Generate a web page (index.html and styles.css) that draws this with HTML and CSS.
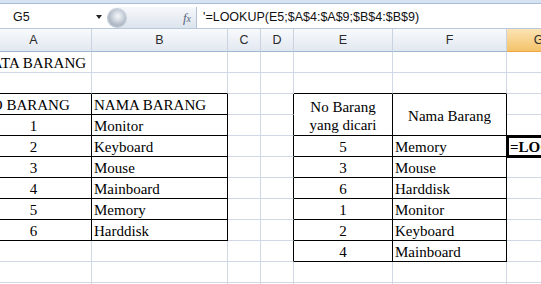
FILE: index.html
```html
<!DOCTYPE html>
<html lang="id">
<head>
    <meta charset="UTF-8">
    <title>LOOKUP - Data Barang</title>
    <link rel="stylesheet" href="styles.css">
</head>
<body>
    <div class="ribbon-edge"></div>

    <div class="formula-bar">
        <div class="name-box">
            <span>G5</span>
            <i class="drop"></i>
        </div>
        <div class="fx-box">
            <span class="grip"></span>
            <span class="fx">f<small>x</small></span>
        </div>
        <div class="formula">'=LOOKUP(E5;$A$4:$A$9;$B$4:$B$9)</div>
    </div>

    <div class="sheet">
        <div class="grid">
            <!-- kolom -->
            <div class="col-head">A</div>
            <div class="col-head">B</div>
            <div class="col-head">C</div>
            <div class="col-head">D</div>
            <div class="col-head">E</div>
            <div class="col-head">F</div>
            <div class="col-head on">G</div>

            <!-- baris 1 -->
            <div class="c ind">DATA BARANG</div>
            <div class="c"></div>
            <div class="c"></div>
            <div class="c"></div>
            <div class="c"></div>
            <div class="c"></div>
            <div class="c"></div>

            <!-- baris 2 -->
            <div class="c above"></div>
            <div class="c above"></div>
            <div class="c"></div>
            <div class="c"></div>
            <div class="c above"></div>
            <div class="c above"></div>
            <div class="c"></div>

            <!-- baris 3 -->
            <div class="c tb ind">NO BARANG</div>
            <div class="c tb">NAMA BARANG</div>
            <div class="c"></div>
            <div class="c before"></div>
            <div class="c tb head2"><span>No Barang<br>yang dicari</span></div>
            <div class="c tb head2"><span>Nama Barang</span></div>
            <div class="c"></div>

            <!-- baris 4 -->
            <div class="c tb mid">1</div>
            <div class="c tb">Monitor</div>
            <div class="c"></div>
            <div class="c before"></div>
            <div class="c"></div>

            <!-- baris 5 -->
            <div class="c tb mid">2</div>
            <div class="c tb">Keyboard</div>
            <div class="c"></div>
            <div class="c before"></div>
            <div class="c tb mid">5</div>
            <div class="c tb">Memory</div>
            <div class="c sel">=LOOKUP(E5;$A$4:$A$9;$B$4:$B$9)</div>

            <!-- baris 6 -->
            <div class="c tb mid">3</div>
            <div class="c tb">Mouse</div>
            <div class="c"></div>
            <div class="c before"></div>
            <div class="c tb mid">3</div>
            <div class="c tb">Mouse</div>
            <div class="c"></div>

            <!-- baris 7 -->
            <div class="c tb mid">4</div>
            <div class="c tb">Mainboard</div>
            <div class="c"></div>
            <div class="c before"></div>
            <div class="c tb mid">6</div>
            <div class="c tb">Harddisk</div>
            <div class="c"></div>

            <!-- baris 8 -->
            <div class="c tb mid">5</div>
            <div class="c tb">Memory</div>
            <div class="c"></div>
            <div class="c before"></div>
            <div class="c tb mid">1</div>
            <div class="c tb">Monitor</div>
            <div class="c"></div>

            <!-- baris 9 -->
            <div class="c tb mid">6</div>
            <div class="c tb">Harddisk</div>
            <div class="c"></div>
            <div class="c before"></div>
            <div class="c tb mid">2</div>
            <div class="c tb">Keyboard</div>
            <div class="c"></div>

            <!-- baris 10 -->
            <div class="c"></div>
            <div class="c"></div>
            <div class="c"></div>
            <div class="c before"></div>
            <div class="c tb mid">4</div>
            <div class="c tb">Mainboard</div>
            <div class="c"></div>

            <!-- baris 11 -->
            <div class="c"></div>
            <div class="c"></div>
            <div class="c"></div>
            <div class="c"></div>
            <div class="c"></div>
            <div class="c"></div>
            <div class="c"></div>

            <!-- baris 12 -->
            <div class="c"></div>
            <div class="c"></div>
            <div class="c"></div>
            <div class="c"></div>
            <div class="c"></div>
            <div class="c"></div>
            <div class="c"></div>
        </div>
    </div>
</body>
</html>
```

FILE: styles.css
```css
body {
    margin: 0;
    background: #fff;
    overflow: hidden;
    font-family: "Liberation Sans", Arial, sans-serif;
}

/* sisa pita di atas */
.ribbon-edge {
    height: 3px;
    background: #d6e3f3;
    border-bottom: 1px solid #a9bdd6;
}

/* formula bar */
.formula-bar {
    display: flex;
    height: 24px;
    border-bottom: 1px solid #b9c9dc;
}

.name-box {
    width: 107px;
    box-sizing: border-box;
    display: flex;
    align-items: center;
    padding-left: 13px;
    padding-top: 2px;
    font-size: 12.5px;
    color: #111;
}

.name-box .drop {
    margin-left: auto;
    margin-right: 5px;
    width: 0;
    height: 0;
    border-left: 3px solid transparent;
    border-right: 3px solid transparent;
    border-top: 4px solid #222;
}

.fx-box {
    width: 90px;
    box-sizing: border-box;
    margin-top: 3px;
    display: flex;
    align-items: center;
    justify-content: space-between;
    padding-right: 5px;
    background: linear-gradient(#f6f8fb, #dde4ed);
    border-radius: 10px 0 0 10px;
    border-right: 1px solid #b6c3d3;
}

.grip {
    width: 18px;
    height: 18px;
    margin-left: 1px;
    border-radius: 50%;
    background: radial-gradient(circle at 55% 40%, #f4f6f9 0, #d9dfe6 4px, #aeb8c4 9px);
    box-shadow: 0 0 0 1px #c3ccd7;
}

.fx {
    font: italic 13px "Liberation Serif", "Times New Roman", serif;
    color: #55657a;
}

.fx small {
    font-size: 10px;
}

.formula {
    display: flex;
    align-items: center;
    padding-left: 6px;
    padding-top: 2px;
    font-size: 12.5px;
    color: #111;
    white-space: nowrap;
}

/* lembar kerja */
.sheet {
    overflow: hidden;
}

.grid {
    display: grid;
    grid-template-columns: 116px 136px 33px 33px 99px 114px 64px;
    grid-template-rows: 23px;
    grid-auto-rows: 21px;
    margin-left: -24px;
    width: 595px;
}

.col-head {
    box-sizing: border-box;
    border-right: 1px solid #c9d2de;
    border-bottom: 1px solid #9eb6ce;
    background: linear-gradient(#f8fafd, #e2e8f0);
    text-align: center;
    font-size: 12.5px;
    line-height: 23px;
    color: #2b2b2b;
}

.col-head.on {
    background: linear-gradient(#fbe4b4, #f4c36a);
    border-bottom-color: #efa546;
}

.c {
    box-sizing: border-box;
    border-right: 1px solid #d0d7e5;
    border-bottom: 1px solid #d0d7e5;
    padding: 1px 2px 0;
    font: 15px/20px "Liberation Serif", "Times New Roman", serif;
    color: #000;
    white-space: nowrap;
    overflow: hidden;
}

.ind {
    padding-left: 5px;
}

.mid {
    text-align: center;
}

/* garis tabel */
.tb {
    border-right-color: #000;
    border-bottom-color: #000;
}

.above {
    border-bottom-color: #000;
}

.before {
    border-right-color: #000;
}

.head2 {
    grid-row: span 2;
    display: flex;
    align-items: center;
    justify-content: center;
    text-align: center;
    white-space: normal;
    line-height: 18px;
    padding-top: 2px;
}

.sel {
    position: relative;
    z-index: 1;
    font-weight: bold;
    padding-left: 3px;
    overflow: visible;
    outline: 3px solid #000;
    outline-offset: -2px;
}
```
